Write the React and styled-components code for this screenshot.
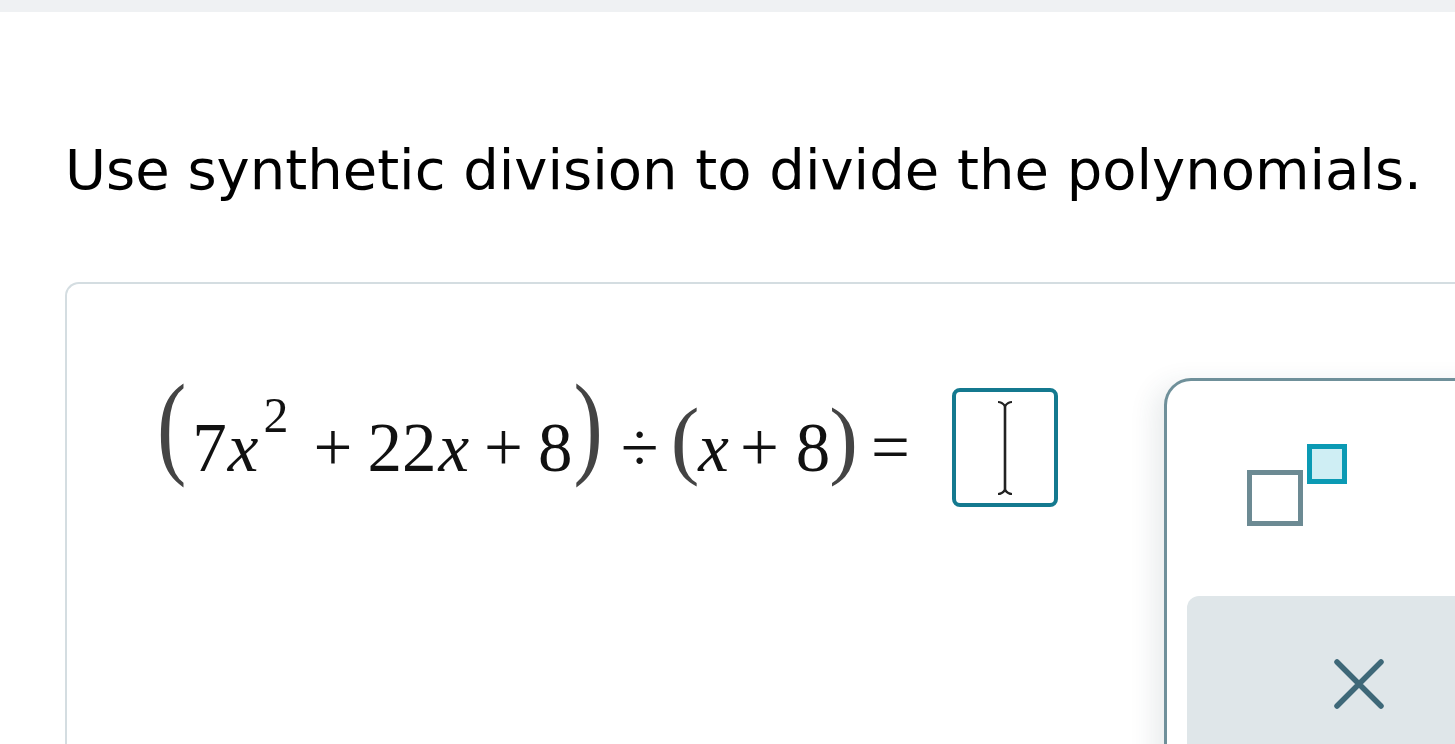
import styled, { createGlobalStyle } from 'styled-components';

const GlobalStyle = createGlobalStyle`
    html, body {
        margin: 0;
        padding: 0;
        background: #ffffff;
        overflow: hidden;
    }
`

const Page = styled.div`
    width: 1455px;
    height: 744px;
    overflow: hidden;
    display: flex;
    flex-direction: column;
`
const TopStrip = styled.div`
    height: 12px;
    flex-shrink: 0;
    background: #eff1f3;
`
const Prompt = styled.p`
    margin: 130px 0 0 65px;
    font-family: "DejaVu Sans", Verdana, sans-serif;
    font-size: 56px;
    line-height: 56px;
    color: #000;
    white-space: nowrap;
`
const Card = styled.section`
    margin: 84px 0 0 65px;
    flex-shrink: 0;
    height: 600px;
    display: flex;
    border: 2px solid #d4dde1;
    border-right: none;
    border-radius: 14px 0 0 0;
`
const MathArea = styled.div`
    width: 1097px;
    flex-shrink: 0;
    padding: 104px 0 0 90px;
    box-sizing: border-box;
    display: flex;
    align-items: flex-start;
`
const Expression = styled.div`
    margin-top: 10px;
    display: flex;
    align-items: baseline;
    font-family: "Liberation Serif", "Times New Roman", serif;
    font-size: 69px;
    line-height: 1;
    color: #111;
`
const Paren = styled.span`
    font-size: ${({ $size }) => $size}px;
    color: #444;
    transform: translateY(${({ $lift }) => $lift}px) scaleY(${({ $sy }) => $sy || 1});
    margin-left: ${({ $ml }) => $ml || 0}px;
`
const Num = styled.span`
    margin-left: ${({ $ml }) => $ml || 0}px;
`
const Var = styled.span`
    font-style: italic;
    margin-left: ${({ $ml }) => $ml || 0}px;
`
const Sup = styled.span`
    font-size: 50px;
    transform: translateY(-39px);
    margin-left: ${({ $ml }) => $ml || 0}px;
`
const Op = styled.span`
    margin-left: ${({ $ml }) => $ml ?? 15}px;
    margin-right: ${({ $mr }) => $mr ?? 15}px;
`
const AnswerBox = styled.span`
    margin-left: 27px;
    width: 106px;
    height: 119px;
    flex-shrink: 0;
    box-sizing: border-box;
    border: 4px solid #14798f;
    border-radius: 8px;
    display: flex;
    align-items: center;
    justify-content: center;
    background: #fff;
`
const Panel = styled.aside`
    flex: 1;
    margin-top: 94px;
    border: 3px solid #6f909a;
    border-right: none;
    border-bottom: none;
    border-radius: 27px 0 0 0;
    background: #fff;
    box-shadow: -10px 6px 26px rgba(40, 70, 80, 0.10);
    display: flex;
    flex-direction: column;
`
const ExponentRow = styled.div`
    height: 215px;
    padding: 63px 0 0 80px;
    display: flex;
    align-items: flex-start;
    box-sizing: border-box;
`
const ExpBase = styled.span`
    margin-top: 26px;
    width: 56px;
    height: 56px;
    box-sizing: border-box;
    border: 5px solid #6c8a93;
    background: #fff;
`
const ExpPower = styled.span`
    margin-left: 4px;
    width: 40px;
    height: 40px;
    box-sizing: border-box;
    border: 5px solid #0b9ab4;
    background: #cfeef4;
`
const KeyGrid = styled.div`
    display: flex;
    padding-left: 20px;
`
const KeyButton = styled.button`
    width: 344px;
    height: 180px;
    border: none;
    border-radius: 12px;
    background: #dfe6e9;
    display: flex;
    justify-content: center;
    align-items: flex-start;
    padding: 62px 0 0 0;
    cursor: pointer;
`

const IBeam = () => (
    <svg width="20" height="98" viewBox="0 0 20 98">
        <path d="M10 6 V92" stroke="#222" strokeWidth="2.6" />
        <path d="M3 3 Q7 3 10 7 Q13 3 17 3" stroke="#222" strokeWidth="2.2" fill="none" />
        <path d="M3 95 Q7 95 10 91 Q13 95 17 95" stroke="#222" strokeWidth="2.2" fill="none" />
    </svg>
)

const CloseIcon = () => (
    <svg width="52" height="52" viewBox="0 0 52 52">
        <path d="M4 4 L48 48 M48 4 L4 48" stroke="#3e6878" strokeWidth="5.5" strokeLinecap="round" />
    </svg>
)

const App = () => {
    return (
        <>
            <GlobalStyle />
            <Page>
                <TopStrip />
                <Prompt>Use synthetic division to divide the polynomials.</Prompt>
                <Card>
                    <MathArea>
                        <Expression>
                            <Paren $size={88} $sy={1.3} $lift={-17}>(</Paren>
                            <Num $ml={6}>7</Num>
                            <Var $ml={1}>x</Var>
                            <Sup $ml={5}>2</Sup>
                            <Op $ml={25}>+</Op>
                            <Num>22</Num>
                            <Var $ml={2}>x</Var>
                            <Op>+</Op>
                            <Num>8</Num>
                            <Paren $size={88} $sy={1.3} $lift={-17} $ml={1}>)</Paren>
                            <Op $ml={18} $mr={12}>÷</Op>
                            <Paren $size={86} $lift={-3}>(</Paren>
                            <Var $ml={-1}>x</Var>
                            <Op $ml={11} $mr={17}>+</Op>
                            <Num>8</Num>
                            <Paren $size={86} $lift={-3} $ml={-1}>)</Paren>
                            <Op $ml={13}>=</Op>
                        </Expression>
                        <AnswerBox>
                            <IBeam />
                        </AnswerBox>
                    </MathArea>
                    <Panel>
                        <ExponentRow>
                            <ExpBase />
                            <ExpPower />
                        </ExponentRow>
                        <KeyGrid>
                            <KeyButton aria-label="clear">
                                <CloseIcon />
                            </KeyButton>
                        </KeyGrid>
                    </Panel>
                </Card>
            </Page>
        </>
    );
};

export default App;
